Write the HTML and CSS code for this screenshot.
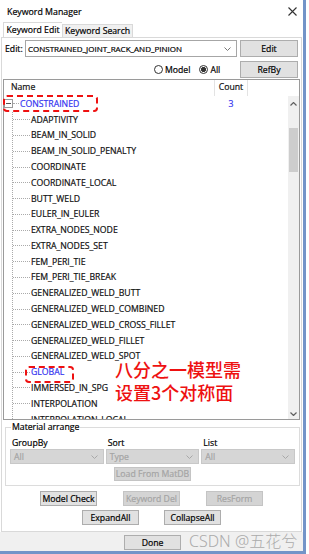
FILE: index.html
```html
<!DOCTYPE html>
<html>
<head>
    <title>Keyword Manager</title>
    <link rel="stylesheet" href="styles.css">
</head>
<body>
    <div class="window">
        <div class="titlebar">
            <span>Keyword Manager</span>
            <svg class="close" width="9" height="9" viewBox="0 0 9 9">
                <path d="M0.5 0.5 L8.5 8.5 M8.5 0.5 L0.5 8.5" stroke="#333" stroke-width="1.1" fill="none"/>
            </svg>
        </div>
        <div class="tabs">
            <div class="tab active">Keyword Edit</div>
            <div class="tab">Keyword Search</div>
        </div>
        <div class="panel">
            <div class="edit-row">
                <span class="edit-label">Edit:</span>
                <div class="combo keyword">
                    <span>CONSTRAINED_JOINT_RACK_AND_PINION</span>
                    <svg width="7" height="4" viewBox="0 0 7 4"><path d="M0.5 0.5 L3.5 3.5 L6.5 0.5" stroke="#777" fill="none"/></svg>
                </div>
                <button class="btn wide">Edit</button>
            </div>
            <div class="radio-row">
                <label class="radio-opt first"><span class="radio"></span>Model</label>
                <label class="radio-opt"><span class="radio checked"></span>All</label>
                <button class="btn wide push">RefBy</button>
            </div>
            <div class="listview">
                <div class="lv-header">
                    <div class="col-name">Name</div>
                    <div class="col-count">Count</div>
                </div>
                <div class="lv-body">
                    <div class="tree">
                        <div class="root">
                            <div class="root-name">
                                <span class="expander"></span>
                                <span class="stub"></span>
                                <span class="blue">CONSTRAINED</span>
                            </div>
                            <div class="count blue">3</div>
                        </div>
                        <div class="children">
                            <div class="child">ADAPTIVITY</div>
                            <div class="child">BEAM_IN_SOLID</div>
                            <div class="child">BEAM_IN_SOLID_PENALTY</div>
                            <div class="child">COORDINATE</div>
                            <div class="child">COORDINATE_LOCAL</div>
                            <div class="child">BUTT_WELD</div>
                            <div class="child">EULER_IN_EULER</div>
                            <div class="child">EXTRA_NODES_NODE</div>
                            <div class="child">EXTRA_NODES_SET</div>
                            <div class="child">FEM_PERI_TIE</div>
                            <div class="child">FEM_PERI_TIE_BREAK</div>
                            <div class="child">GENERALIZED_WELD_BUTT</div>
                            <div class="child">GENERALIZED_WELD_COMBINED</div>
                            <div class="child">GENERALIZED_WELD_CROSS_FILLET</div>
                            <div class="child">GENERALIZED_WELD_FILLET</div>
                            <div class="child">GENERALIZED_WELD_SPOT</div>
                            <div class="child blue">GLOBAL</div>
                            <div class="child">IMMERSED_IN_SPG</div>
                            <div class="child">INTERPOLATION</div>
                            <div class="child">INTERPOLATION_LOCAL</div>
                        </div>
                    </div>
                    <div class="scrollbar">
                        <div class="sb-btn up">
                            <svg width="7" height="4" viewBox="0 0 7 4"><path d="M0.5 3.5 L3.5 0.5 L6.5 3.5" stroke="#606060" stroke-width="1.2" fill="none"/></svg>
                        </div>
                        <div class="sb-thumb"></div>
                        <div class="sb-btn down">
                            <svg width="7" height="4" viewBox="0 0 7 4"><path d="M0.5 0.5 L3.5 3.5 L6.5 0.5" stroke="#606060" stroke-width="1.2" fill="none"/></svg>
                        </div>
                    </div>
                </div>
            </div>
            <fieldset class="group">
                <legend>Material arrange</legend>
                <div class="group-grid">
                    <span class="group-label">GroupBy</span>
                    <span class="group-label">Sort</span>
                    <span class="group-label">List</span>
                    <div class="combo disabled"><span>All</span><svg width="7" height="4" viewBox="0 0 7 4"><path d="M0.5 0.5 L3.5 3.5 L6.5 0.5" stroke="#a8a8a8" fill="none"/></svg></div>
                    <div class="combo disabled"><span>Type</span><svg width="7" height="4" viewBox="0 0 7 4"><path d="M0.5 0.5 L3.5 3.5 L6.5 0.5" stroke="#a8a8a8" fill="none"/></svg></div>
                    <div class="combo disabled"><span>All</span><svg width="7" height="4" viewBox="0 0 7 4"><path d="M0.5 0.5 L3.5 3.5 L6.5 0.5" stroke="#a8a8a8" fill="none"/></svg></div>
                </div>
                <button class="btn disabled matdb">Load From MatDB</button>
            </fieldset>
            <div class="actions">
                <button class="btn">Model Check</button>
                <button class="btn disabled">Keyword Del</button>
                <button class="btn disabled">ResForm</button>
            </div>
            <div class="actions second">
                <button class="btn">ExpandAll</button>
                <button class="btn">CollapseAll</button>
            </div>
        </div>
        <div class="footer">
            <button class="btn">Done</button>
        </div>

        <!-- annotations drawn over the dialog -->
        <div class="mark mark-root"></div>
        <div class="mark mark-global"></div>
        <div class="note">八分之一模型需<br>设置3个对称面</div>
        <div class="watermark">CSDN @五花兮</div>
    </div>
</body>
</html>
```

FILE: styles.css
```css
body {
    margin: 0;
    background: #fff;
    font-family: "Open Sans", "Liberation Sans", sans-serif;
    font-size: 8.7px;
    color: #111;
    -webkit-text-stroke: 0.2px;
}

.window {
    position: relative;
    width: 303px;
    height: 551px;
    border-right: 3px solid #7394c8;
    border-bottom: 3px solid #7394c8;
    display: flex;
    flex-direction: column;
    background: #fff;
}

.titlebar {
    height: 22px;
    box-sizing: border-box;
    padding: 1px 6px 0 7px;
    display: flex;
    align-items: center;
    justify-content: space-between;
    color: #000;
    font-size: 8.8px;
}

.tabs {
    height: 15px;
    display: flex;
    align-items: flex-end;
    padding-left: 3px;
}

.tab {
    box-sizing: border-box;
    height: 13px;
    line-height: 12px;
    padding: 0 2px;
    border: 1px solid #d9d9d9;
    border-bottom: none;
    background: #f0f0f0;
    text-align: center;
    white-space: nowrap;
    color: #000;
}

.tab.active {
    width: 59px;
    height: 15px;
    line-height: 14px;
    padding: 0;
    background: #fff;
    border-right: none;
}

.panel {
    flex: 1;
    margin: 0 1px;
    padding: 2px 1px 0 1px;
    border: 1px solid #d9d9d9;
    display: flex;
    flex-direction: column;
}

.edit-row {
    display: flex;
    align-items: center;
    height: 17px;
    padding: 0 2px;
}

.edit-label {
    width: 20px;
    color: #000;
}

.combo {
    box-sizing: border-box;
    height: 17px;
    border: 1px solid #a6a6a6;
    background: #fff;
    display: flex;
    align-items: center;
    justify-content: space-between;
    padding: 0 5px 0 2px;
    color: #000;
    white-space: nowrap;
}

.combo.keyword {
    width: 212px;
    margin-right: 3px;
    font-size: 8px;
}

.combo.disabled {
    height: 15px;
    background: #d6d6d6;
    border-color: #c8c8c8;
    color: #a4a4a4;
    padding-left: 3px;
}

.btn {
    box-sizing: border-box;
    width: 57px;
    height: 15px;
    padding: 0;
    border: 1px solid #adadad;
    background: #e1e1e1;
    font: inherit;
    color: #000;
    white-space: nowrap;
}

.btn.wide {
    width: 58px;
    height: 17px;
}

.btn.disabled {
    background: #d4d4d4;
    border-color: #c4c4c4;
    color: #a4a4a4;
}

.radio-row {
    display: flex;
    align-items: center;
    height: 17px;
    margin-top: 4px;
    padding-right: 2px;
}

.radio-opt {
    display: flex;
    align-items: center;
    gap: 2px;
    color: #000;
}

.radio-opt.first {
    margin-left: 151px;
    margin-right: 9px;
}

.radio {
    box-sizing: border-box;
    width: 9px;
    height: 9px;
    border: 1px solid #333;
    border-radius: 50%;
    background: #fff;
}

.radio.checked {
    background: radial-gradient(circle, #333 2.2px, #fff 2.9px);
}

.push {
    margin-left: auto;
}

.listview {
    margin-top: 1px;
    height: 341px;
    box-sizing: border-box;
    border: 1px solid #9a9a9a;
    display: flex;
    flex-direction: column;
}

.lv-header {
    height: 16px;
    flex-shrink: 0;
    display: flex;
    line-height: 15px;
}

.col-name {
    width: 210px;
    padding-left: 7px;
    box-sizing: border-box;
}

.col-count {
    width: 34px;
    box-sizing: border-box;
    border-left: 1px solid #e3e3e3;
    border-right: 1px solid #e3e3e3;
    text-align: center;
}

.lv-body {
    flex: 1;
    display: flex;
    overflow: hidden;
}

.tree {
    flex: 1;
    overflow: hidden;
}

.root {
    display: flex;
    align-items: center;
    height: 15.79px;
}

.root-name {
    width: 210px;
    display: flex;
    align-items: center;
}

.expander {
    box-sizing: border-box;
    width: 9px;
    height: 9px;
    border: 1px solid #9a9a9a;
    background: linear-gradient(#555, #555) center / 5px 1px no-repeat;
}

.stub {
    width: 6px;
    border-top: 1px dotted #aaa;
    margin-right: 1px;
}

.count {
    width: 34px;
    text-align: center;
}

.blue {
    color: #3535f0;
}

.children {
    margin-left: 8px;
    border-left: 1px dotted #aaa;
}

.child {
    display: flex;
    align-items: center;
    height: 15.79px;
    white-space: nowrap;
}

.child::before {
    content: "";
    width: 17px;
    border-top: 1px dotted #aaa;
    margin-right: 1px;
}

.scrollbar {
    width: 11px;
    background: #f0f0f0;
    display: flex;
    flex-direction: column;
    align-items: center;
}

.sb-btn {
    height: 16px;
    display: flex;
    align-items: center;
    justify-content: center;
}

.sb-btn.down {
    margin-top: auto;
    height: 11px;
}

.sb-thumb {
    width: 9px;
    height: 44px;
    margin-top: 16px;
    background: #cdcdcd;
}

.group {
    margin: 1px 0 0 2px;
    padding: 0 4px 4px;
    border: 1px solid #dcdcdc;
    min-width: 0;
}

.group legend {
    padding: 0 1px;
    margin-left: 1px;
    line-height: 12px;
    color: #000;
}

.group-grid {
    display: grid;
    grid-template-columns: repeat(3, 1fr);
    column-gap: 2px;
}

.group-label {
    margin-top: 4px;
    padding-left: 2px;
    line-height: 12px;
    color: #000;
}

.matdb {
    display: block;
    width: 77px;
    height: 14px;
    margin: 3px auto 0;
}

.actions {
    display: flex;
    justify-content: center;
    gap: 26px;
    margin-top: 5px;
}

.actions.second {
    gap: 25px;
    margin-top: 4px;
}

.footer {
    height: 19px;
    background: #f0f0f0;
    display: flex;
    justify-content: center;
    padding: 3px 0 0 2px;
    box-sizing: border-box;
}

.mark {
    position: absolute;
    border: 2px dashed #ee1111;
    border-radius: 4px;
    box-sizing: border-box;
}

.mark-root {
    left: 3px;
    top: 95px;
    width: 95px;
    height: 17px;
}

.mark-global {
    left: 25px;
    top: 366px;
    width: 49px;
    height: 17px;
}

.note {
    position: absolute;
    left: 115px;
    top: 358px;
    font-family: "Noto Sans CJK SC", sans-serif;
    font-size: 18px;
    line-height: 23px;
    font-weight: 500;
    color: #ee1111;
    -webkit-text-stroke: 0;
}

.watermark {
    position: absolute;
    left: 189px;
    top: 531px;
    font-family: "Noto Sans", "Noto Sans CJK SC", sans-serif;
    font-size: 16px;
    line-height: 21px;
    color: #ababab;
    font-weight: 300;
    -webkit-text-stroke: 0;
}
```
